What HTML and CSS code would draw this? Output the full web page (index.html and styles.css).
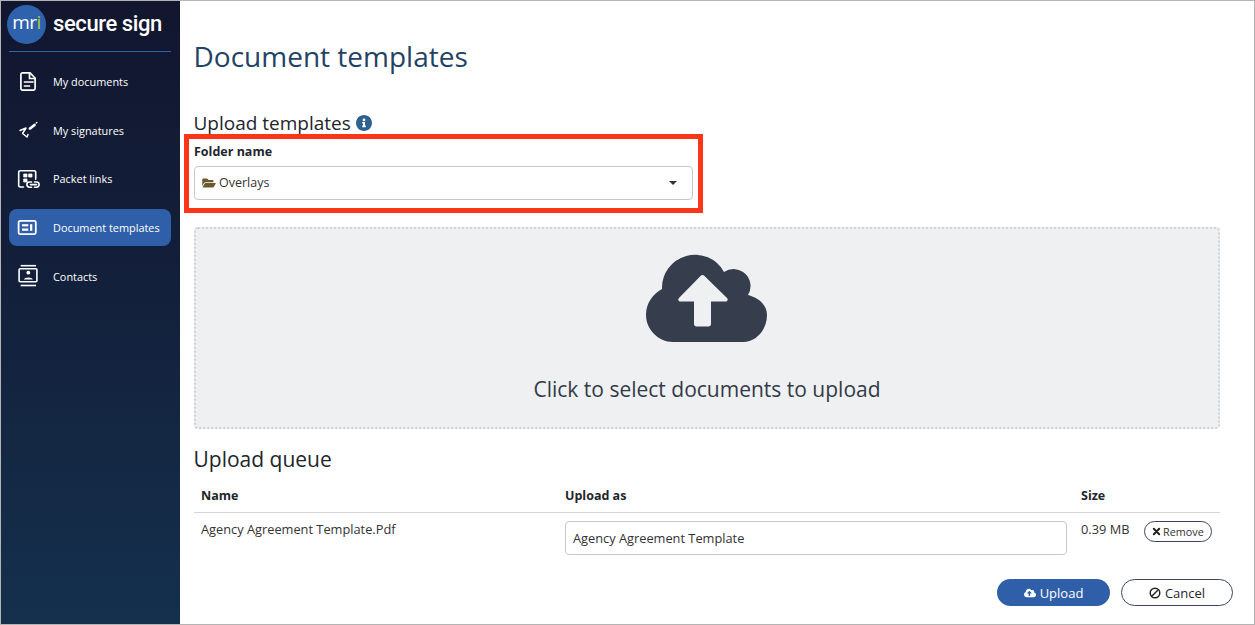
FILE: index.html
```html
<!DOCTYPE html>
<html lang="en">
<head>
<meta charset="utf-8">
<title>Document templates</title>
<link rel="stylesheet" href="styles.css">
</head>
<body>
<div class="app">
  <aside class="sidebar">
    <div class="brand">
      <div class="logo"><span>m</span><span>r</span><span class="logo-i">i</span></div>
      <span class="brand-name">secure sign</span>
    </div>
    <nav class="nav">
      <a class="nav-item">
        <svg class="nav-icon" viewBox="0 0 24 24" fill="none" stroke="#fff" stroke-width="1.700" stroke-linejoin="round" stroke-linecap="round"><path d="M5.500 2.900H13l5.100 5.100v10.500a1.600 1.600 0 0 1-1.600 1.600h-11a1.600 1.600 0 0 1-1.600-1.600V4.500a1.600 1.600 0 0 1 1.600-1.600z"/><path d="M12.500 3v5.500H18"/><path d="M7.500 12h8.500M7.500 16h5"/></svg>
        <span>My documents</span>
      </a>
      <a class="nav-item">
        <svg class="nav-icon" viewBox="0 0 24 24" fill="none" stroke="#fff" stroke-width="1.500" stroke-linecap="round" stroke-linejoin="round"><path d="M3 12.500l6-2.500-3.500 5.500 4.500 3.500 1-2.500"/><path d="M13 10.500l4.500-3.500" stroke-width="2.800"/><path d="M19.200 5l.6-.5"/></svg>
        <span>My signatures</span>
      </a>
      <a class="nav-item">
        <svg class="nav-icon" viewBox="0 0 24 24" fill="none" stroke="#fff" stroke-width="1.600" stroke-linecap="round" stroke-linejoin="round"><path d="M6.500 20H3.300a1.600 1.600 0 0 1-1.600-1.600V5.300a1.600 1.600 0 0 1 1.600-1.600h13.800a1.600 1.600 0 0 1 1.600 1.600v7"/><rect x="7" y="7" width="3" height="3" fill="#fff" stroke-width=".8"/><rect x="12" y="7" width="3" height="3" fill="#fff" stroke-width=".8"/><rect x="7" y="12" width="3" height="3" fill="#fff" stroke-width=".8"/><path d="M14.500 15h-2a2.600 2.600 0 0 0 0 5.200h2M17.500 15h2a2.600 2.600 0 0 1 0 5.200h-2M13.500 17.600h6"/></svg>
        <span>Packet links</span>
      </a>
      <a class="nav-item active">
        <svg class="nav-icon" viewBox="0 0 24 24" fill="none" stroke="#fff" stroke-width="1.800" stroke-linejoin="round"><rect x="1.600" y="4.900" width="17.200" height="13.200" rx="1.500"/><rect x="5" y="8.200" width="6.300" height="2.200" fill="#fff" stroke="none"/><rect x="5" y="12.500" width="6.300" height="2.300" fill="#fff" stroke="none"/><rect x="13" y="8.200" width="2.300" height="6.600" fill="#fff" stroke="none"/></svg>
        <span>Document templates</span>
      </a>
      <a class="nav-item">
        <svg class="nav-icon" viewBox="0 0 24 24" fill="none" stroke="#fff" stroke-width="1.600" stroke-linejoin="round"><path d="M3.700 1.700H19"/><rect x="2.100" y="4.800" width="17.800" height="13" rx="1"/><circle cx="11.300" cy="8.700" r="1.900" fill="#fff" stroke="none"/><path d="M6.800 15.500c.6-2.800 8.400-2.800 9 0z" fill="#fff" stroke="none"/><path d="M3.700 21.500H19"/></svg>
        <span>Contacts</span>
      </a>
    </nav>
  </aside>
  <main class="main">
    <h1 class="title">Document templates</h1>
    <h2 class="subtitle">Upload templates
      <svg class="info" viewBox="8 8 496 496"><path fill="#2f6190" d="M256 8C119 8 8 119 8 256s111 248 248 248 248-111 248-248S393 8 256 8zm0 110a42 42 0 1 1 0 84 42 42 0 0 1 0-84zm56 254c0 7-5 12-12 12h-88c-7 0-12-5-12-12v-24c0-7 5-12 12-12h12v-64h-12c-7 0-12-5-12-12v-24c0-7 5-12 12-12h64c7 0 12 5 12 12v100h12c7 0 12 5 12 12z"/></svg>
    </h2>
    <div class="highlight">
      <label class="field-label">Folder name</label>
      <div class="select">
        <svg class="folder" viewBox="0 0 576 512"><path fill="#6b5a2e" d="M572.700 292.100l-72.400 124.100A64 64 0 0 1 445 448H45c-18.500 0-30.100-20.100-20.700-36.100l72.400-124.100A64 64 0 0 1 152 256h400c18.500 0 30.100 20.100 20.700 36.100zM152 224h328v-48c0-26.500-21.500-48-48-48H272l-64-64H48C21.500 64 0 85.500 0 112v278l69.100-118.400C86.200 242.300 118 224 152 224z"/></svg>
        <span class="select-value">Overlays</span>
        <span class="caret"></span>
      </div>
    </div>
    <div class="dropzone">
      <svg class="cloud" viewBox="0 0 122 90">
        <path fill="#363d4d" d="M27 89C12 89 0 76 0 62 0 50 7 41 16 36A33 33 0 0 1 78 19 17 17 0 0 1 102 42C113 45 121 52 121 62 121 77 110 89 97 89z"/>
        <path fill="#eff0f2" d="M54.500 23L33 45c-1.500 1.500-.5 3.500 1.500 3.500H48V71c0 1.500 1 2.500 2.500 2.500h12c1.500 0 2.500-1 2.500-2.500V48.500h14.500c2 0 3-2 1.500-3.500L58.500 23c-1-1.500-3-1.500-4 0z"/>
      </svg>
      <p class="drop-text">Click to select documents to upload</p>
    </div>
    <h2 class="queue-title">Upload queue</h2>
    <div class="table">
      <div class="row head">
        <div class="col-name">Name</div>
        <div class="col-as">Upload as</div>
        <div class="col-size">Size</div>
      </div>
      <div class="row body">
        <div class="col-name">Agency Agreement Template.Pdf</div>
        <div class="col-as"><div class="input">Agency Agreement Template</div></div>
        <div class="col-size">
          <span>0.39 MB</span>
          <button class="remove"><svg class="x" viewBox="0 0 10 10"><path d="M2 2l6 6M8 2l-6 6" stroke="#222" stroke-width="2.200" stroke-linecap="round"/></svg>Remove</button>
        </div>
      </div>
    </div>
    <div class="actions">
      <button class="btn primary"><svg class="btn-icon" viewBox="0 0 640 512"><path fill="#fff" d="M537.600 226.600c4.100-10.700 6.400-22.400 6.400-34.600 0-53-43-96-96-96-19.700 0-38.100 6-53.300 16.200C367 64.200 315.300 32 256 32c-88.400 0-160 71.600-160 160 0 2.700.1 5.400.2 8.100C40.200 219.800 0 273.200 0 336c0 79.500 64.500 144 144 144h368c70.700 0 128-57.300 128-128 0-61.900-44-113.600-102.400-125.400zM393.400 288H328v112c0 8.800-7.200 16-16 16h-48c-8.800 0-16-7.200-16-16V288h-65.400c-14.300 0-21.400-17.200-11.300-27.300l105.400-105.400c6.200-6.200 16.400-6.200 22.600 0l105.400 105.400c10.100 10.100 2.900 27.300-11.300 27.300z"/></svg>Upload</button>
      <button class="btn outline"><svg class="btn-icon" viewBox="0 0 20 20"><circle cx="10" cy="10" r="8" fill="none" stroke="#222" stroke-width="2.400"/><path d="M5 15L15 5" stroke="#222" stroke-width="2.400"/></svg>Cancel</button>
    </div>
  </main>
</div>
</body>
</html>
```

FILE: styles.css
```css
* { box-sizing: border-box; }
html, body { margin: 0; padding: 0; height: 100%; overflow: hidden; }
body { font-family: "Open Sans", sans-serif; color: #22252b; background: #fff; }
.app { display: flex; width: 1255px; height: 625px; border: 1px solid #b4b4b4; background: #fff; }
.sidebar { width: 179px; flex: none; background: linear-gradient(180deg, #12162f 0%, #13213c 50%, #14304d 100%); padding: 4px 9px 0 8px; color: #fff; }
.brand { display: flex; align-items: center; height: 39px; margin-left: -2px; gap: 7px; }
.logo { width: 39px; height: 39px; border-radius: 50%; background: #2f62ad; display: flex; align-items: center; justify-content: center; font-family: "Open Sans", sans-serif; font-size: 19px; line-height: 1; color: #fff; letter-spacing: -.6px; padding-bottom: 4px; flex: none; }
.logo-i { color: #a5cf3c; }
.brand-name { font-family: "Roboto", sans-serif; font-weight: 500; font-size: 22px; letter-spacing: -.4px; color: #fff; white-space: nowrap; padding-bottom: 2px; }
.nav { margin-top: 7px; border-top: 1px solid #2f62ad; padding-top: 11px; display: flex; flex-direction: column; gap: 11.700px; }
.nav-item { display: flex; align-items: center; height: 37px; border-radius: 8px; padding-left: 8px; gap: 12px; font-size: 10.900px; font-weight: 500; color: #fff; white-space: nowrap; }
.nav-item.active { background: #2f5fa9; }
.nav-icon { width: 24px; height: 24px; flex: none; }
.main { flex: 1; min-width: 0; padding: 0 34px 0 14px; }
.title { margin: 36px 0 0 -.5px; font-size: 28px; line-height: 38px; font-weight: 400; color: #1f4364; }
.subtitle { margin: 37px 0 0 -.5px; font-size: 19px; line-height: 22px; font-weight: 400; color: #22252b; display: flex; align-items: center; gap: 5px; }
.info { width: 16px; height: 16px; }
.highlight { margin: 0 0 0 -10px; width: 519px; height: 79px; border: 5px solid #fb3517; padding: 4px 5px 0; }
.field-label { display: block; font-size: 12.500px; line-height: 17px; font-weight: 700; color: #22252b; }
.select { margin-top: 6px; height: 34px; border: 1px solid #c8c8c8; border-radius: 4px; display: flex; align-items: center; padding: 0 14px 0 7px; }
.folder { width: 14px; height: 12px; margin-right: 3px; }
.select-value { flex: 1; font-size: 12.500px; line-height: 16px; padding-bottom: 1px; color: #333; }
.caret { width: 0; height: 0; border-left: 4px solid transparent; border-right: 4px solid transparent; border-top: 4px solid #333; margin-right: 1px; }
.dropzone { margin-top: 14px; width: 1026px; height: 202px; background: #eff0f2; border: 2px dotted #d0d2d5; border-radius: 4px; display: flex; flex-direction: column; align-items: center; }
.cloud { width: 122px; height: 90px; margin-top: 24px; }
.drop-text { margin: 32px 0 0; font-size: 21px; line-height: 29px; color: #333a47; }
.queue-title { margin: 16px 0 0 -.5px; font-size: 21px; line-height: 29px; font-weight: 400; color: #22252b; }
.table { margin-top: 9px; width: 1026px; font-size: 12.800px; }
.row { display: flex; }
.head { height: 30px; border-bottom: 1px solid #d5d5d5; font-size: 12.500px; font-weight: 700; align-items: center; padding-bottom: 5px; }
.body { padding-top: 8px; color: #333; }
.col-name { width: 371px; padding-left: 7px; flex: none; }
.col-as { width: 516px; flex: none; }
.col-size { flex: 1; display: flex; gap: 15px; align-items: flex-start; }
.body .col-name { line-height: 17px; }
.body .col-size span { line-height: 17px; }
.input { width: 502px; height: 34px; border: 1px solid #c8c8c8; border-radius: 4px; padding: 0 0 1px 7px; display: flex; align-items: center; }
.remove { font-family: "Open Sans", sans-serif; font-size: 10.800px; color: #333; background: #fff; border: 1px solid #3a4660; border-radius: 11px; height: 21px; width: 68px; display: flex; align-items: center; justify-content: center; gap: 2px; padding: 0 1px 0 0; }
.x { width: 9px; height: 9px; }
.actions { margin-top: 24px; width: 1039px; display: flex; justify-content: flex-end; gap: 11px; }
.btn { font-family: "Open Sans", sans-serif; font-size: 13px; width: 113px; height: 27px; border-radius: 14px; display: flex; align-items: center; justify-content: center; gap: 4px; padding: 0; }
.btn.primary { background: #2f5fa9; color: #fff; border: none; font-weight: 500; }
.btn.outline { width: 112px; background: #fff; border: 1px solid #3a4660; color: #22252b; }
.btn-icon { width: 12px; height: 12px; }
```
